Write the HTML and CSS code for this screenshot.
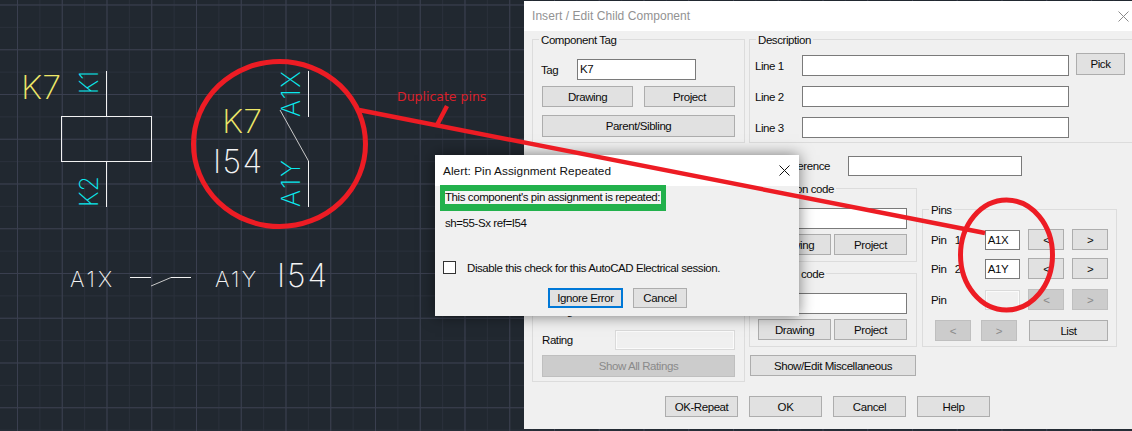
FILE: index.html
```html
<!DOCTYPE html>
<html lang="en">
<head>
    <meta charset="UTF-8">
    <meta name="viewport" content="width=device-width, initial-scale=1.0">
    <title>Alert: Pin Assignment Repeated</title>
    <link rel="stylesheet" href="styles.css">
</head>
<body>

<div class="canvas">
    <svg class="drawing" width="524" height="431" viewBox="0 0 524 431">
        <g class="wire">
            <rect x="61.5" y="116.5" width="90" height="45"/>
            <path d="M106.5 71V116M106.5 162V207"/>
            <path d="M308.5 71V117M308.5 161V207"/>
            <path d="M130 277.5H151M171 277.5H191"/>
        </g>
        <path class="wire-soft" d="M280 110L308.5 161M151 286L171 277.5"/>

        <text class="cad yellow" x="21" y="99" textLength="40" lengthAdjust="spacingAndGlyphs">K7</text>
        <text class="cad yellow" x="222" y="133" textLength="40" lengthAdjust="spacingAndGlyphs">K7</text>
        <text class="cad white" x="213" y="173" textLength="49" lengthAdjust="spacing">I54</text>
        <text class="cad white" x="277" y="287" textLength="50" lengthAdjust="spacing">I54</text>
        <text class="cad-small white" x="70" y="287" textLength="42" lengthAdjust="spacing">A1X</text>
        <text class="cad-small white" x="215" y="287" textLength="41" lengthAdjust="spacing">A1Y</text>

        <text class="cad-side cyan" transform="translate(98 94) rotate(-90)" textLength="23" lengthAdjust="spacingAndGlyphs">K1</text>
        <text class="cad-side cyan" transform="translate(98 207) rotate(-90)" textLength="31" lengthAdjust="spacingAndGlyphs">K2</text>
        <text class="cad-side cyan" transform="translate(300 117) rotate(-90)" textLength="46" lengthAdjust="spacing">A1X</text>
        <text class="cad-side cyan" transform="translate(300 207) rotate(-90)" textLength="47" lengthAdjust="spacing">A1Y</text>
    </svg>
</div>

<div class="window child-window">
    <div class="titlebar">
        <span>Insert / Edit Child Component</span>
        <svg class="close" width="11" height="11" viewBox="0 0 11 11"><path d="M0.5 0.5L10.5 10.5M10.5 0.5L0.5 10.5"/></svg>
    </div>
    <div class="child-body">
        <div class="top-row">
            <div class="group tag-group">
                <span class="legend">Component Tag</span>
                <div class="tag-row">
                    <label>Tag</label>
                    <div class="field tag-field">K7</div>
                </div>
                <div class="btn-pair">
                    <button class="btn">Drawing</button>
                    <button class="btn">Project</button>
                </div>
                <button class="btn wide">Parent/Sibling</button>
            </div>
            <div class="group desc-group">
                <span class="legend">Description</span>
                <div class="line-row">
                    <label>Line 1</label>
                    <div class="field line-field"></div>
                    <button class="btn pick">Pick</button>
                </div>
                <div class="line-row">
                    <label>Line 2</label>
                    <div class="field line-field"></div>
                </div>
                <div class="line-row">
                    <label>Line 3</label>
                    <div class="field line-field"></div>
                </div>
            </div>
        </div>

        <div class="main-row">
            <div class="group rating-group">
                <div class="behind-alert"><label>Rating</label></div>
                <div class="rating-row">
                    <label>Rating</label>
                    <div class="field off rating-field"></div>
                </div>
                <button class="btn off wide">Show All Ratings</button>
            </div>

            <div class="mid-col">
                <div class="ref-row">
                    <label>Reference</label>
                    <div class="field ref-field"></div>
                </div>
                <div class="code-cols">
                    <div class="code-stack">
                        <div class="group code-group">
                            <span class="legend">Installation code</span>
                            <div class="field code-field"></div>
                            <div class="code-btns">
                                <button class="btn">Drawing</button>
                                <button class="btn">Project</button>
                            </div>
                        </div>
                        <div class="group code-group">
                            <span class="legend">Location code</span>
                            <div class="field code-field"></div>
                            <div class="code-btns">
                                <button class="btn">Drawing</button>
                                <button class="btn">Project</button>
                            </div>
                        </div>
                    </div>
                    <div class="group pins-group">
                        <span class="legend">Pins</span>
                        <div class="pin-row">
                            <label>Pin&nbsp;&nbsp;&nbsp;1</label>
                            <div class="field pin-field">A1X</div>
                            <button class="btn arrow">&lt;</button>
                            <button class="btn arrow">&gt;</button>
                        </div>
                        <div class="pin-row">
                            <label>Pin&nbsp;&nbsp;&nbsp;2</label>
                            <div class="field pin-field">A1Y</div>
                            <button class="btn arrow">&lt;</button>
                            <button class="btn arrow">&gt;</button>
                        </div>
                        <div class="pin-row">
                            <label>Pin</label>
                            <div class="field off pin-field"></div>
                            <button class="btn off arrow">&lt;</button>
                            <button class="btn off arrow">&gt;</button>
                        </div>
                        <div class="pin-foot">
                            <button class="btn off arrow">&lt;</button>
                            <button class="btn off arrow">&gt;</button>
                            <button class="btn list">List</button>
                        </div>
                    </div>
                </div>
                <button class="btn misc">Show/Edit Miscellaneous</button>
            </div>
        </div>

        <div class="footer">
            <button class="btn">OK-Repeat</button>
            <button class="btn">OK</button>
            <button class="btn">Cancel</button>
            <button class="btn">Help</button>
        </div>
    </div>
</div>

<div class="window alert">
    <div class="titlebar alert-title">
        <span>Alert: Pin Assignment Repeated</span>
        <svg class="close dark" width="11" height="11" viewBox="0 0 11 11"><path d="M0.5 0.5L10.5 10.5M10.5 0.5L0.5 10.5"/></svg>
    </div>
    <div class="alert-body">
        <div class="green-box">This component's pin assignment is repeated:</div>
        <p class="alert-ref">sh=55-Sx ref=I54</p>
        <div class="check-row">
            <span class="checkbox"></span>
            <span>Disable this check for this AutoCAD Electrical session.</span>
        </div>
        <div class="alert-btns">
            <button class="btn focus">Ignore Error</button>
            <button class="btn">Cancel</button>
        </div>
    </div>
</div>

<svg class="markup" width="1132" height="431" viewBox="0 0 1132 431">
    <ellipse cx="279.5" cy="144" rx="86" ry="82.5"/>
    <ellipse cx="1006.5" cy="255" rx="46" ry="55"/>
    <path d="M359 110L985 233M437 125L447 106"/>
    <text x="397" y="101">Duplicate pins</text>
</svg>

</body>
</html>
```

FILE: styles.css
```css
* {
    box-sizing: border-box;
}
html, body {
    margin: 0;
    height: 100%;
}
body {
    position: relative;
    width: 1132px;
    height: 431px;
    overflow: hidden;
    background-color: #212830;
    font-family: "Liberation Sans", Arial, sans-serif;
    font-size: 11.5px;
    letter-spacing: -0.42px;
    color: #0c0c0c;
}

/* model space */
.canvas {
    position: absolute;
    inset: 0;
    background-color: #212830;
    background-image:
        linear-gradient(to right, #3a3f4f 1px, transparent 1px),
        linear-gradient(to bottom, #3a3f4f 1px, transparent 1px),
        linear-gradient(to right, #2a303b 1px, transparent 1px),
        linear-gradient(to bottom, #2a303b 1px, transparent 1px);
    background-size: 44.76px 100%, 100% 44.76px, 22.38px 100%, 100% 22.38px;
    background-position: 17px 0, 0 4.5px, 17px 0, 0 4.5px;
}
.drawing {
    display: block;
}
.wire {
    fill: none;
    stroke: #f2f2f2;
    stroke-width: 1;
}
.wire-soft {
    fill: none;
    stroke: #c9c9c9;
    stroke-width: 1;
}
.cad, .cad-small, .cad-side {
    font-family: Inter, "DejaVu Sans", sans-serif;
    font-weight: 200;
    letter-spacing: 0;
}
.cad {
    font-size: 32px;
}
.cad-small {
    font-size: 22px;
}
.cad-side {
    font-size: 26px;
}
.yellow { fill: #eee768; }
.white { fill: #f4f4f4; }
.cyan { fill: #0ce8ee; }

/* windows */
.window {
    position: absolute;
    background-color: #f0f0f0;
}
.child-window {
    left: 524px;
    top: 1px;
    width: 608px;
    height: 428px;
    overflow: hidden;
}
.titlebar {
    display: flex;
    justify-content: space-between;
    align-items: center;
    height: 30px;
    padding: 0 3px 0 8px;
    background-color: #fff;
    color: #929292;
    font-size: 12px;
    letter-spacing: 0.05px;
}
.close path {
    fill: none;
    stroke: #8a8a8a;
    stroke-width: 1;
}
.close.dark path {
    stroke: #111;
}
.child-body {
    padding: 8px 0 0 8px;
}

.group {
    position: relative;
    border: 1px solid #dcdcdc;
}
.legend {
    position: absolute;
    left: 6px;
    top: -7px;
    padding: 0 2px;
    background-color: #f0f0f0;
    line-height: 14px;
    white-space: nowrap;
}
label {
    white-space: nowrap;
}
.field {
    border: 1px solid #7a7a7a;
    background-color: #fff;
    padding-left: 2px;
    line-height: 18px;
}
.field.off {
    border-color: #dadada;
    background-color: #f0f0f0;
    box-shadow: inset 0 0 0 1px #fbfbfb;
}
.btn {
    height: 21px;
    padding: 0;
    border: 1px solid #adadad;
    background-color: #e1e1e1;
    font: inherit;
    letter-spacing: inherit;
    color: #0c0c0c;
}
.btn.off {
    border-color: #bfbfbf;
    background-color: #cccccc;
    color: #8a8a8a;
}
.btn.wide {
    display: block;
    width: 100%;
}

/* top groups */
.top-row {
    display: flex;
    gap: 4px;
}
.tag-group {
    flex: none;
    width: 213px;
    height: 104px;
    padding: 19px 9px 0 9px;
}
.tag-row {
    display: flex;
    align-items: center;
    margin-bottom: 6px;
}
.tag-row label {
    width: 36px;
    margin-left: -1px;
}
.tag-field {
    width: 119px;
    height: 21px;
}
.btn-pair {
    display: flex;
    gap: 11px;
    margin-bottom: 8px;
}
.btn-pair .btn {
    width: 91px;
}
.tag-group .wide {
    height: 22px;
}
.desc-group {
    flex: 1;
    height: 104px;
    margin-right: -20px;
    padding: 15px 0 0 5px;
}
.line-row {
    display: flex;
    align-items: center;
    height: 21px;
    margin-bottom: 10px;
}
.line-row label {
    width: 47px;
}
.line-field {
    width: 267px;
    height: 21px;
}
.pick {
    width: 49px;
    height: 22px;
    margin: -3px 0 0 7px;
}

/* lower part */
.main-row {
    display: flex;
    gap: 4px;
}
.rating-group {
    flex: none;
    width: 213px;
    height: 222px;
    margin-top: 17px;
    padding: 144px 9px 0 9px;
}
.behind-alert {
    height: 12px;
    line-height: 12px;
    margin-bottom: 13px;
}
.rating-row {
    display: flex;
    align-items: center;
    justify-content: space-between;
    height: 20px;
    margin-bottom: 5px;
}
.rating-field {
    width: 120px;
    height: 20px;
}
.rating-group .wide {
    height: 22px;
}
.mid-col {
    width: 369px;
    padding-top: 13px;
}
.ref-row {
    display: flex;
    align-items: center;
    justify-content: flex-end;
    gap: 18px;
    height: 20px;
    margin: 0 96px 12px 0;
}
.ref-field {
    width: 174px;
    height: 20px;
}
.code-cols {
    display: flex;
    gap: 5px;
    align-items: flex-end;
}
.code-stack {
    display: flex;
    flex-direction: column;
    gap: 11px;
}
.code-group {
    width: 168px;
    height: 74px;
    padding: 19px 9px 0 8px;
}
.code-field {
    height: 21px;
}
.code-btns {
    display: flex;
    gap: 3px;
    margin-top: 5px;
}
.code-btns .btn {
    width: 73px;
}
.pins-group {
    width: 195px;
    height: 138px;
    padding: 19px 8px 0 8px;
}
.pin-row {
    display: flex;
    align-items: flex-end;
    gap: 8px;
    height: 21px;
    margin-bottom: 10px;
}
.legend + .pin-row {
    margin-bottom: 8px;
}
.pin-row label {
    width: 46px;
    align-self: center;
}
.pin-field {
    width: 36px;
    height: 20px;
}
.arrow {
    width: 36px;
}
.pin-foot {
    display: flex;
    margin-left: 4px;
}
.pin-foot .arrow + .arrow {
    margin-left: 10px;
}
.list {
    width: 79px;
    margin-left: 12px;
}
.misc {
    display: block;
    width: 166px;
    margin: 8px 0 0 1px;
}
.footer {
    display: flex;
    gap: 11px;
    margin: 14px 0 0 133px;
}
.footer .btn {
    width: 73px;
}

/* alert */
.alert {
    left: 435px;
    top: 155px;
    width: 364px;
    height: 161px;
    box-shadow: 0 0 14px rgba(0, 0, 0, 0.5);
}
.alert-title {
    height: 31px;
    padding: 0 9px 0 8px;
    color: #111;
    font-size: 11.8px;
}
.alert-body {
    padding-left: 5px;
}
.green-box {
    position: relative;
    width: 226px;
    height: 26px;
    margin-top: -1px;
    border: 5px solid #22b14c;
    border-top-width: 6px;
    border-bottom-width: 7px;
    background-color: #f4f4f4;
    line-height: 13px;
    white-space: nowrap;
}
.alert-ref {
    margin: 5px 0 0 5px;
    line-height: 14px;
}
.check-row {
    display: flex;
    align-items: center;
    gap: 11px;
    margin: 31px 0 0 3px;
}
.checkbox {
    width: 13px;
    height: 13px;
    border: 1px solid #333;
    background-color: #fff;
}
.alert-btns {
    display: flex;
    gap: 10px;
    margin: 14px 0 0 108px;
}
.alert-btns .btn {
    width: 54px;
    height: 20px;
}
.alert-btns .focus {
    width: 75px;
    border: 2px solid #0078d7;
}

/* red annotation on top of everything */
.markup {
    position: absolute;
    left: 0;
    top: 0;
}
.markup ellipse, .markup path {
    fill: none;
    stroke: #ed1c24;
    stroke-width: 5;
}
.markup path {
    stroke-width: 4.5;
}
.markup text {
    fill: #d9202a;
    font-family: "DejaVu Sans", sans-serif;
    font-size: 12.5px;
    letter-spacing: 0;
}
```
